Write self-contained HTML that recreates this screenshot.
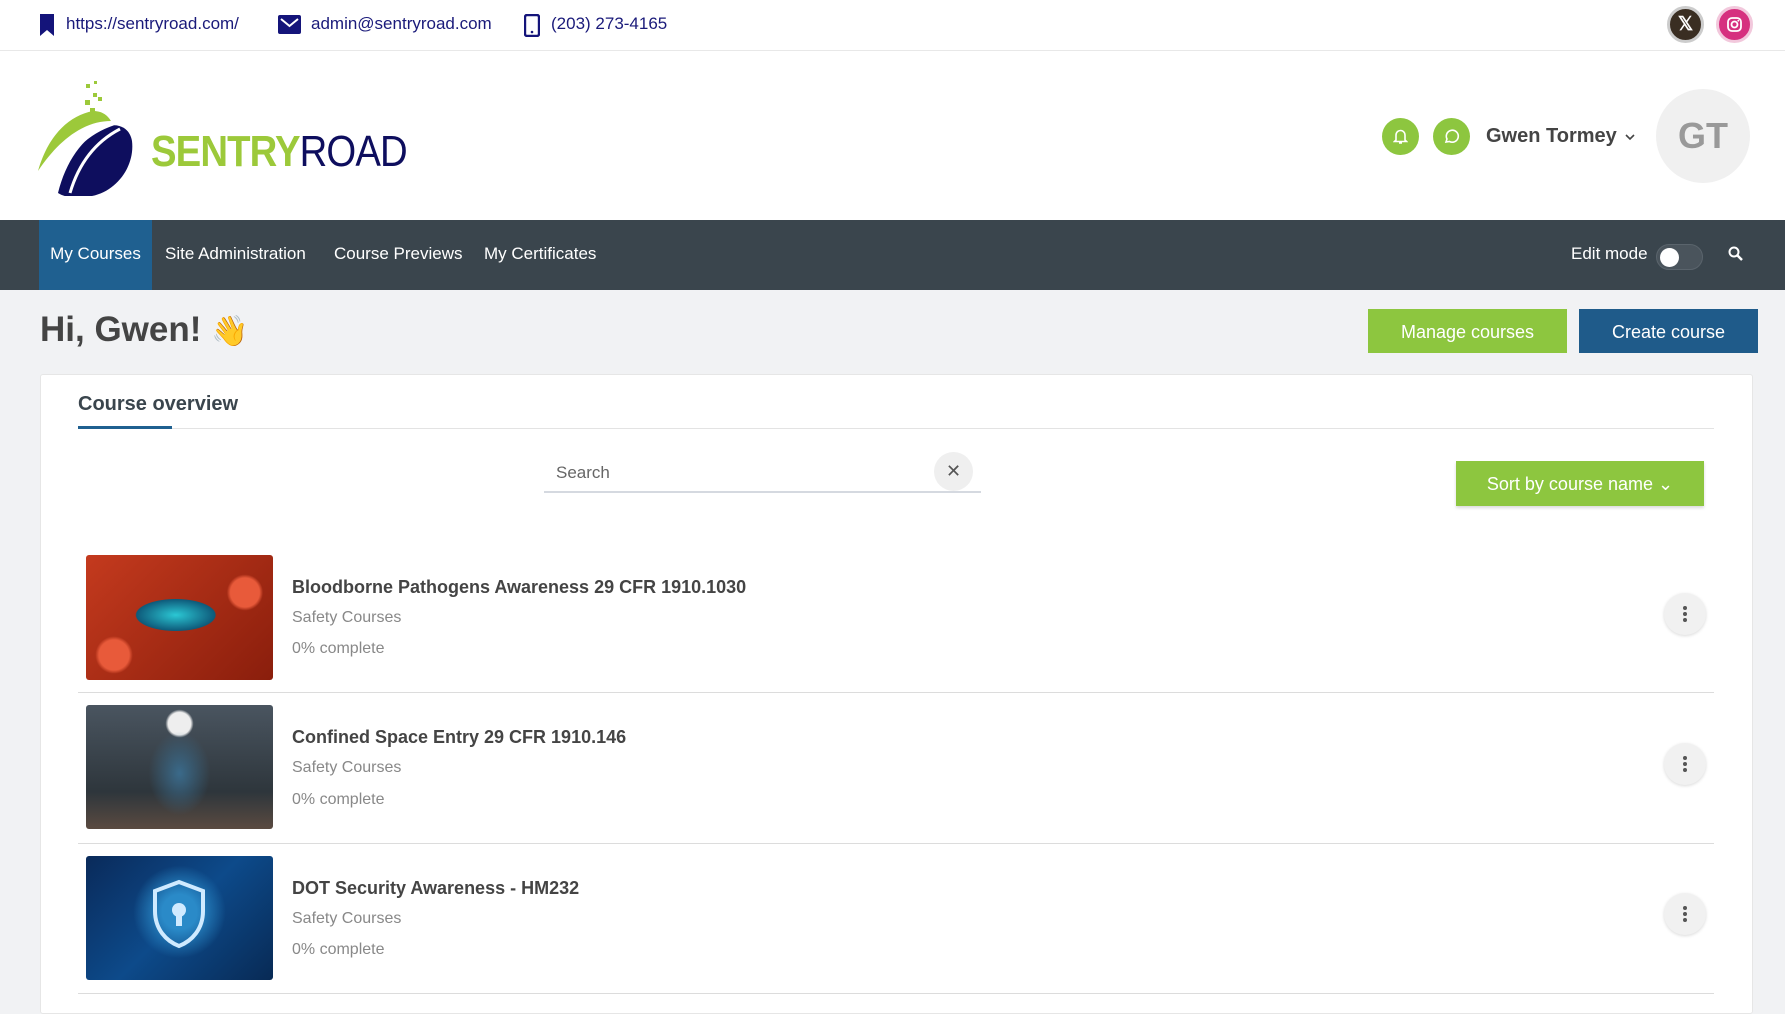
<!DOCTYPE html>
<html><head><meta charset="utf-8">
<style>
*{box-sizing:border-box;margin:0;padding:0}
body{width:1785px;height:994px;overflow:hidden;background:#f1f2f4;font-family:"Liberation Sans",sans-serif;color:#444;position:relative}
.abs{position:absolute}
.top{left:0;top:0;width:1785px;height:51px;background:#fff;border-bottom:1px solid #e8e8e8}
.top .t{top:14px;font-size:17px;color:#1a1a7a}
.head{left:0;top:51px;width:1785px;height:169px;background:#fff}
.nav{left:0;top:220px;width:1785px;height:70px;background:#3a454d}
.nav .i{top:0;height:70px;line-height:68px;color:#fff;font-size:17px}
.btn{color:#fff;font-size:18px;text-align:center}
.card{left:40px;top:374px;width:1713px;height:640px;background:#fff;border:1px solid #e6e6e6;border-radius:3px}
.title{font-size:18px;font-weight:bold;color:#444}
.sub{font-size:16px;color:#888}
.kebab{width:42px;height:42px;border-radius:50%;background:#f1f1f1;box-shadow:0 1px 3px rgba(0,0,0,.15)}
.kebab i{position:absolute;left:19px;width:4px;height:4px;border-radius:2px;background:#555}
.sep{left:78px;width:1636px;height:1px;background:#dcdcdc}
</style></head><body>
<div class="abs top">
 <svg class="abs" style="left:39px;top:14px" width="16" height="22" viewBox="0 0 16 22"><path d="M1 0h14v22l-7-6-7 6z" fill="#14147a"/></svg>
 <div class="abs t" style="left:66px">https://sentryroad.com/</div>
 <svg class="abs" style="left:278px;top:15px" width="23" height="19" viewBox="0 0 23 19"><rect width="23" height="19" rx="2" fill="#14147a"/><path d="M3 4l8.5 7L20 4" stroke="#fff" stroke-width="2" fill="none"/></svg>
 <div class="abs t" style="left:311px">admin@sentryroad.com</div>
 <svg class="abs" style="left:524px;top:14px" width="16" height="23" viewBox="0 0 16 23"><rect x="1" y="1" width="14" height="21" rx="2" fill="none" stroke="#14147a" stroke-width="2.4"/><circle cx="8" cy="18" r="1.3" fill="#14147a"/></svg>
 <div class="abs t" style="left:551px">(203) 273-4165</div>
 <div class="abs" style="left:1667px;top:6px;width:37px;height:37px;border-radius:50%;background:#3a2e22;border:3px solid #ccc;color:#fff;font-weight:bold;font-size:19px;text-align:center;line-height:31px">𝕏</div>
 <div class="abs" style="left:1716px;top:6px;width:37px;height:37px;border-radius:50%;background:#d6307f;border:3px solid #f2c8dc"><svg class="abs" style="left:8px;top:8px" width="15" height="15" viewBox="0 0 15 15"><rect x="1" y="1" width="13" height="13" rx="4" fill="none" stroke="#fff" stroke-width="1.8"/><circle cx="7.5" cy="7.5" r="3" fill="none" stroke="#fff" stroke-width="1.8"/><circle cx="11.3" cy="3.7" r=".9" fill="#fff"/></svg></div>
</div>
<div class="abs head">
 <svg class="abs" style="left:38px;top:30px" width="110" height="115" viewBox="0 0 110 115">
  <rect x="48" y="3" width="4" height="4" fill="#9cc93a"/><rect x="56" y="0" width="3" height="3" fill="#9cc93a"/><rect x="55" y="12" width="4" height="4" fill="#9cc93a"/><rect x="60" y="16" width="4" height="4" fill="#9cc93a"/><rect x="47" y="19" width="5" height="5" fill="#9cc93a"/><rect x="52" y="27" width="5" height="5" fill="#9cc93a"/>
  <path d="M0 90C10 55 30 35 55 30c10 0 15 5 18 10C45 40 20 60 0 90z" fill="#9cc93a"/>
  <path d="M20 112C28 80 45 55 70 45c12-3 22 3 24 15c3 25-15 50-40 55c-14 3-26 2-34-3z" fill="#0e0e5e"/>
  <path d="M14 105C25 75 45 52 75 42" stroke="#fff" stroke-width="5" fill="none"/>
  <path d="M32 112C40 85 55 62 82 48" stroke="#fff" stroke-width="3" fill="none"/>
 </svg>
 <div class="abs" style="left:151px;top:76px;font-size:44px;font-weight:bold;letter-spacing:-1px;transform:scaleX(.87);transform-origin:left"><span style="color:#9cc93a">SENTRY</span><span style="color:#0e0e5e;font-weight:normal">ROAD</span></div>
 <div class="abs" style="left:1382px;top:67px;width:37px;height:37px;border-radius:50%;background:#8dc63f"><svg class="abs" style="left:11px;top:10px" width="15" height="17" viewBox="0 0 15 17"><path d="M3 12V7a4.5 4.5 0 0 1 9 0v5l1.5 1.5h-12z M6 15h3" fill="none" stroke="#fff" stroke-width="1.6"/></svg></div>
 <div class="abs" style="left:1433px;top:67px;width:37px;height:37px;border-radius:50%;background:#8dc63f"><svg class="abs" style="left:10px;top:10px" width="17" height="17" viewBox="0 0 17 17"><path d="M3 14l1-3a6 6 0 1 1 2.5 2.5z" fill="none" stroke="#fff" stroke-width="1.6"/></svg></div>
 <div class="abs" style="left:1486px;top:74px;font-size:20px;font-weight:bold;color:#444">Gwen Tormey</div>
 <svg class="abs" style="left:1624px;top:82px" width="12" height="8" viewBox="0 0 12 8"><path d="M2 2l4 4 4-4" stroke="#444" stroke-width="1.6" fill="none"/></svg>
 <div class="abs" style="left:1656px;top:38px;width:94px;height:94px;border-radius:50%;background:#f0f0f0;color:#999;font-size:36px;font-weight:bold;text-align:center;line-height:94px">GT</div>
</div>
<div class="abs nav">
 <div class="abs i" style="left:39px;width:113px;background:#1f6090;text-align:center">My Courses</div>
 <div class="abs i" style="left:165px">Site Administration</div>
 <div class="abs i" style="left:334px">Course Previews</div>
 <div class="abs i" style="left:484px">My Certificates</div>
 <div class="abs i" style="left:1571px">Edit mode</div>
 <div class="abs" style="left:1656px;top:24px;width:47px;height:26px;border-radius:13px;background:#4a545c;border:1px solid #5a646c"><div class="abs" style="left:3px;top:3px;width:19px;height:19px;border-radius:50%;background:#fff"></div></div>
 <svg class="abs" style="left:1728px;top:26px" width="16" height="16" viewBox="0 0 16 16"><circle cx="6" cy="6" r="4.5" fill="none" stroke="#fff" stroke-width="2"/><path d="M9.5 9.5l4.5 4.5" stroke="#fff" stroke-width="2.5"/></svg>
</div>
<div class="abs" style="left:40px;top:310px;font-size:35px;font-weight:bold;color:#444">Hi, Gwen! <span style="font-size:30px">👋</span></div>
<div class="abs btn" style="left:1368px;top:309px;width:199px;height:44px;line-height:46px;background:#8dc63f">Manage courses</div>
<div class="abs btn" style="left:1579px;top:309px;width:179px;height:44px;line-height:46px;background:#1f5b8a">Create course</div>
<div class="abs card"></div>
<div class="abs" style="left:78px;top:393px;font-size:20px;font-weight:bold;color:#3a454d">Course overview</div>
<div class="abs" style="left:78px;top:428px;width:1636px;height:1px;background:#e3e3e3"></div>
<div class="abs" style="left:78px;top:426px;width:94px;height:3px;background:#1f6090"></div>
<div class="abs" style="left:556px;top:463px;font-size:17px;color:#666">Search</div>
<div class="abs" style="left:544px;top:491px;width:437px;height:2px;background:#d5d9e0"></div>
<div class="abs" style="left:934px;top:452px;width:39px;height:39px;border-radius:50%;background:#efefef;color:#555;text-align:center;line-height:38px;font-size:18px">✕</div>
<div class="abs btn" style="left:1456px;top:461px;width:248px;height:45px;line-height:47px;background:#8dc63f;box-shadow:0 2px 3px rgba(0,0,0,.15)">Sort by course name ⌄</div>

<div class="abs" style="left:86px;top:555px;width:187px;height:125px;border-radius:3px;background:radial-gradient(ellipse 30% 18% at 48% 48%,#2bc7d4,#0e5a7a 70%,transparent 72%),radial-gradient(circle at 85% 30%,#e85a3a 8%,transparent 10%),radial-gradient(circle at 15% 80%,#e85a3a 8%,transparent 10%),linear-gradient(135deg,#c43a1e,#8a1e0c)"></div>
<div class="abs title" style="left:292px;top:577px">Bloodborne Pathogens Awareness 29 CFR 1910.1030</div>
<div class="abs sub" style="left:292px;top:609px">Safety Courses</div>
<div class="abs sub" style="left:292px;top:640px">0% complete</div>
<div class="abs kebab" style="left:1664px;top:593px"><i style="top:13px"></i><i style="top:19px"></i><i style="top:25px"></i></div>
<div class="abs sep" style="top:692px"></div>

<div class="abs" style="left:86px;top:705px;width:187px;height:124px;border-radius:3px;background:radial-gradient(ellipse 22% 45% at 50% 55%,#3a6a8a,transparent 75%),radial-gradient(circle at 50% 15%,#eee 8%,transparent 10%),linear-gradient(180deg,#4a5560,#2e363c 70%,#5a4a40)"></div>
<div class="abs title" style="left:292px;top:727px">Confined Space Entry 29 CFR 1910.146</div>
<div class="abs sub" style="left:292px;top:759px">Safety Courses</div>
<div class="abs sub" style="left:292px;top:791px">0% complete</div>
<div class="abs kebab" style="left:1664px;top:743px"><i style="top:13px"></i><i style="top:19px"></i><i style="top:25px"></i></div>
<div class="abs sep" style="top:843px"></div>

<div class="abs" style="left:86px;top:856px;width:187px;height:124px;border-radius:3px;background:radial-gradient(circle at 50% 45%,#2a8ac8 15%,transparent 40%),linear-gradient(135deg,#0a2a5a,#0d4a8a 50%,#082a55)"><svg class="abs" style="left:62px;top:22px" width="62" height="72" viewBox="0 0 62 72"><path d="M31 4l24 9v20c0 18-11 30-24 35C18 63 7 51 7 33V13z" fill="none" stroke="#cfeaff" stroke-width="4"/><circle cx="31" cy="32" r="7" fill="#cfeaff"/><rect x="28" y="36" width="6" height="12" fill="#cfeaff"/></svg></div>
<div class="abs title" style="left:292px;top:878px">DOT Security Awareness - HM232</div>
<div class="abs sub" style="left:292px;top:910px">Safety Courses</div>
<div class="abs sub" style="left:292px;top:941px">0% complete</div>
<div class="abs kebab" style="left:1664px;top:893px"><i style="top:13px"></i><i style="top:19px"></i><i style="top:25px"></i></div>
<div class="abs sep" style="top:993px"></div>
</body></html>
